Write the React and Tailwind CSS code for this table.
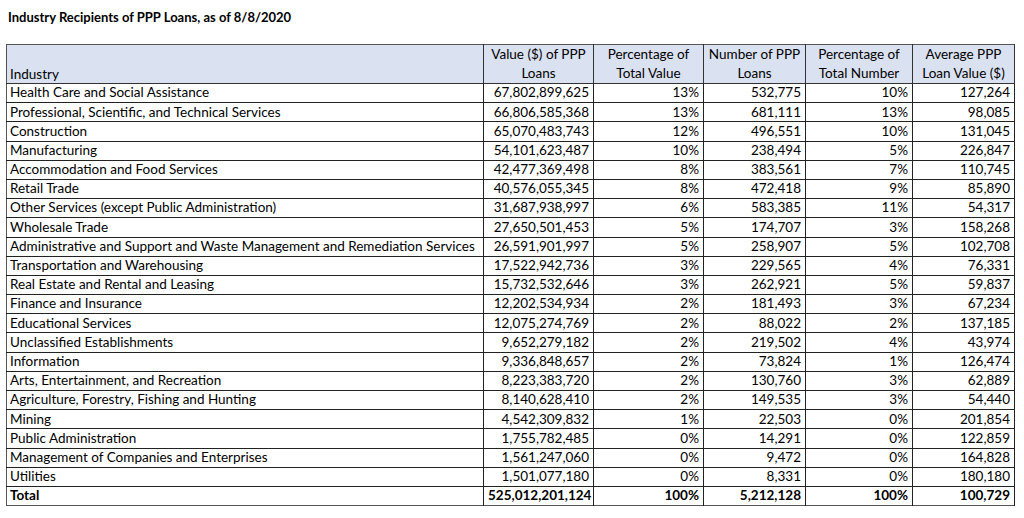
import React from "react";

const rows = [
  ["Health Care and Social Assistance", "67,802,899,625", "13%", "532,775", "10%", "127,264"],
  ["Professional, Scientific, and Technical Services", "66,806,585,368", "13%", "681,111", "13%", "98,085"],
  ["Construction", "65,070,483,743", "12%", "496,551", "10%", "131,045"],
  ["Manufacturing", "54,101,623,487", "10%", "238,494", "5%", "226,847"],
  ["Accommodation and Food Services", "42,477,369,498", "8%", "383,561", "7%", "110,745"],
  ["Retail Trade", "40,576,055,345", "8%", "472,418", "9%", "85,890"],
  ["Other Services (except Public Administration)", "31,687,938,997", "6%", "583,385", "11%", "54,317"],
  ["Wholesale Trade", "27,650,501,453", "5%", "174,707", "3%", "158,268"],
  ["Administrative and Support and Waste Management and Remediation Services", "26,591,901,997", "5%", "258,907", "5%", "102,708"],
  ["Transportation and Warehousing", "17,522,942,736", "3%", "229,565", "4%", "76,331"],
  ["Real Estate and Rental and Leasing", "15,732,532,646", "3%", "262,921", "5%", "59,837"],
  ["Finance and Insurance", "12,202,534,934", "2%", "181,493", "3%", "67,234"],
  ["Educational Services", "12,075,274,769", "2%", "88,022", "2%", "137,185"],
  ["Unclassified Establishments", "9,652,279,182", "2%", "219,502", "4%", "43,974"],
  ["Information", "9,336,848,657", "2%", "73,824", "1%", "126,474"],
  ["Arts, Entertainment, and Recreation", "8,223,383,720", "2%", "130,760", "3%", "62,889"],
  ["Agriculture, Forestry, Fishing and Hunting", "8,140,628,410", "2%", "149,535", "3%", "54,440"],
  ["Mining", "4,542,309,832", "1%", "22,503", "0%", "201,854"],
  ["Public Administration", "1,755,782,485", "0%", "14,291", "0%", "122,859"],
  ["Management of Companies and Enterprises", "1,561,247,060", "0%", "9,472", "0%", "164,828"],
  ["Utilities", "1,501,077,180", "0%", "8,331", "0%", "180,180"],
];

const total = ["Total", "525,012,201,124", "100%", "5,212,128", "100%", "100,729"];

const heads = [
  ["Value ($) of PPP", "Loans"],
  ["Percentage of", "Total Value"],
  ["Number of PPP", "Loans"],
  ["Percentage of", "Total Number"],
  ["Average PPP", "Loan Value ($)"],
];

export default function App() {
  return (
    <div className="w-[1024px] h-[518px] bg-white text-black overflow-hidden" style={{ fontFamily: "Lato, 'Noto Sans', sans-serif" }}>
      <div className="pl-[8px] pt-[9px] h-[44px] text-[13px] font-bold leading-[16px]">
        Industry Recipients of PPP Loans, as of 8/8/2020
      </div>
      <table className="ml-[6px] w-[1008px] table-fixed border-collapse border-[1.5px] border-[#555] text-[13.5px] leading-none">
        <colgroup>
          <col className="w-[477px]" />
          <col className="w-[110px]" />
          <col className="w-[110px]" />
          <col className="w-[102px]" />
          <col className="w-[107px]" />
          <col className="w-[102px]" />
        </colgroup>
        <thead>
          <tr className="bg-[#dae1f1] h-[39px]">
            <th className="border-r border-b border-[#333] text-left font-normal align-bottom px-[3px] pb-[2px]">Industry</th>
            {heads.map((h, i) => (
              <th key={i} className="border-r border-b border-[#333] font-normal text-center align-middle leading-[19px] px-0 whitespace-nowrap">
                {h[0]}
                <br />
                {h[1]}
              </th>
            ))}
          </tr>
        </thead>
        <tbody>
          {rows.map((r, i) => (
            <tr key={i} className="h-[19.2px]">
              <td className="border-r border-b border-[#222] px-[3px] whitespace-nowrap">{r[0]}</td>
              {r.slice(1).map((c, j) => (
                <td key={j} className="border-r border-b border-[#222] text-right px-[4px]">{c}</td>
              ))}
            </tr>
          ))}
          <tr className="h-[19.2px] font-bold">
            <td className="border-r border-[#222] px-[3px]">{total[0]}</td>
            {total.slice(1).map((c, j) => (
              <td key={j} className="border-r border-[#222] text-right px-[4px]">{c}</td>
            ))}
          </tr>
        </tbody>
      </table>
    </div>
  );
}
